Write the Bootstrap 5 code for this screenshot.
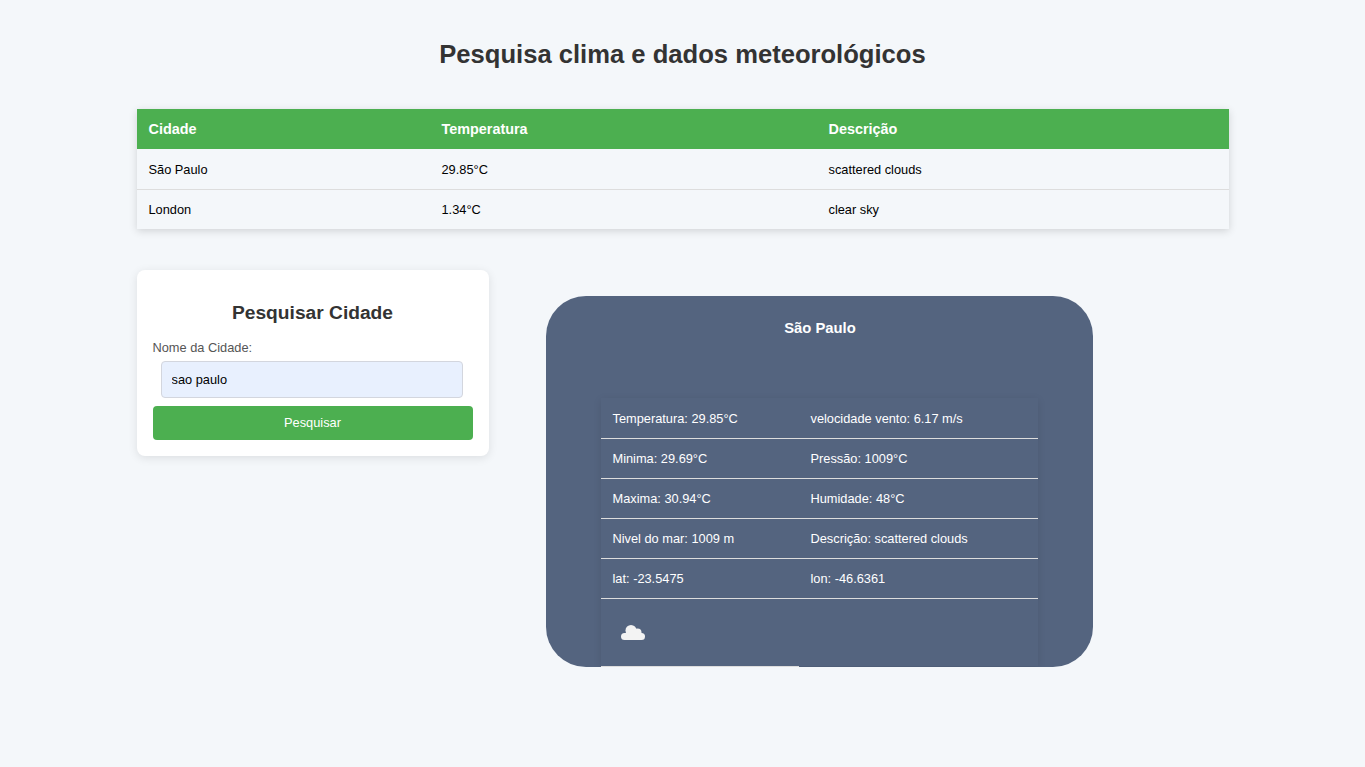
<!DOCTYPE html>
<html lang="pt-BR">
<head>
  <meta charset="UTF-8">
  <meta name="viewport" content="width=device-width, initial-scale=1.0">
  <title>Pesquisa clima</title>
  <link href="https://cdn.jsdelivr.net/npm/bootstrap@5.3.0/dist/css/bootstrap.min.css" rel="stylesheet">
  <style>
    body { background: #f4f7fa; font-family: "Liberation Sans", Arial, sans-serif; font-size: 12.8px; color: #000; }
    .page-wrap { width: 1092px; margin: 0 auto; }
    .page-title { font-size: 25.6px; font-weight: 700; color: #333; line-height: 30px; margin: 0; padding: 39px 0 40px; text-align: center; }
    .clima-table { width: 100%; border-collapse: collapse; box-shadow: 0 2px 8px rgba(0,0,0,.15); table-layout: fixed; }
    .clima-table th { background: #4caf50; color: #fff; font-size: 14.4px; font-weight: 700; padding: 1px 12px 0; height: 40px; }
    .clima-table td { padding: 1px 12px 0; height: 40px; border-bottom: 1px solid #ddd; }
    .clima-table tr:last-child td { border-bottom: 0; padding-top: 0; }
    .content-row { margin-top: 41px; }
    .busca-card { width: 352px; height: 186px; background: #fff; border-radius: 8px; padding: 16px; box-shadow: 0 2px 10px rgba(0,0,0,.1); }
    .busca-card h2 { font-size: 19.2px; font-weight: 700; color: #333; line-height: 23px; text-align: center; margin: 15px 0 16px; }
    .busca-card label { display: block; color: #555; line-height: 16px; margin-bottom: 5px; }
    .busca-input { display: block; width: 302px; height: 37px; margin: 0 0 8px 8px; padding: 0 10px; background: #e8f0fe; border: 1px solid #d3d6de; border-radius: 4px; font-size: 12.8px; color: #000; }
    .busca-btn { display: block; width: 100%; height: 34px; border: 0; border-radius: 4px; background: #4caf50; color: #fff; font-size: 12.8px; }
    .tempo-panel { width: 547px; height: 371px; margin: 26px 0 0 57px; background: #54647f; border-radius: 40px; color: #fff; padding-top: 24px; }
    .tempo-panel h3 { font-size: 14.8px; font-weight: 700; line-height: 17px; text-align: center; margin: 0 0 61px; padding-left: 2px; }
    .tempo-wrap { width: 437px; height: 268px; margin-left: 55px; box-shadow: 0 2px 8px rgba(0,0,0,.1); }
    .tempo-table { width: 100%; border-collapse: collapse; table-layout: fixed; }
    .tempo-table td { height: 40px; padding: 1px 12px 0; border-bottom: 1px solid #ddd; }
    .tempo-table tr:last-child td { height: 68px; padding: 0 12px; }
    .tempo-table tr:last-child td + td { border-bottom: 0; }
  </style>
</head>
<body>

<div class="page-wrap">
  <h1 class="page-title">Pesquisa clima e dados meteorológicos</h1>

  <table class="clima-table">
    <colgroup><col style="width:293px"><col style="width:387px"><col></colgroup>
    <thead>
      <tr><th>Cidade</th><th>Temperatura</th><th>Descrição</th></tr>
    </thead>
    <tbody>
      <tr><td>São Paulo</td><td>29.85°C</td><td>scattered clouds</td></tr>
      <tr><td>London</td><td>1.34°C</td><td>clear sky</td></tr>
    </tbody>
  </table>

  <div class="d-flex align-items-start content-row">
    <div class="busca-card">
      <h2>Pesquisar Cidade</h2>
      <form>
        <label for="cidade">Nome da Cidade:</label>
        <input class="busca-input" type="text" id="cidade" value="sao paulo">
        <button class="busca-btn" type="button">Pesquisar</button>
      </form>
    </div>

    <div class="tempo-panel">
      <h3>São Paulo</h3>
      <div class="tempo-wrap">
        <table class="tempo-table">
          <colgroup><col style="width:198px"><col></colgroup>
          <tbody>
            <tr><td>Temperatura: 29.85°C</td><td>velocidade vento: 6.17 m/s</td></tr>
            <tr><td>Minima: 29.69°C</td><td>Pressão: 1009°C</td></tr>
            <tr><td>Maxima: 30.94°C</td><td>Humidade: 48°C</td></tr>
            <tr><td>Nivel do mar: 1009 m</td><td>Descrição: scattered clouds</td></tr>
            <tr><td>lat: -23.5475</td><td>lon: -46.6361</td></tr>
            <tr>
              <td>
                <svg width="24" height="15" viewBox="0 0 24 15" class="d-block ms-2" aria-hidden="true">
                  <g fill="#f3f3f3">
                    <rect x="0" y="8" width="24" height="7" rx="3.5"/>
                    <circle cx="10" cy="5.500" r="5.500"/>
                    <circle cx="16.500" cy="7.500" r="4"/>
                  </g>
                </svg>
              </td>
              <td></td>
            </tr>
          </tbody>
        </table>
      </div>
    </div>
  </div>
</div>

<script src="https://cdn.jsdelivr.net/npm/bootstrap@5.3.0/dist/js/bootstrap.bundle.min.js"></script>
</body>
</html>
